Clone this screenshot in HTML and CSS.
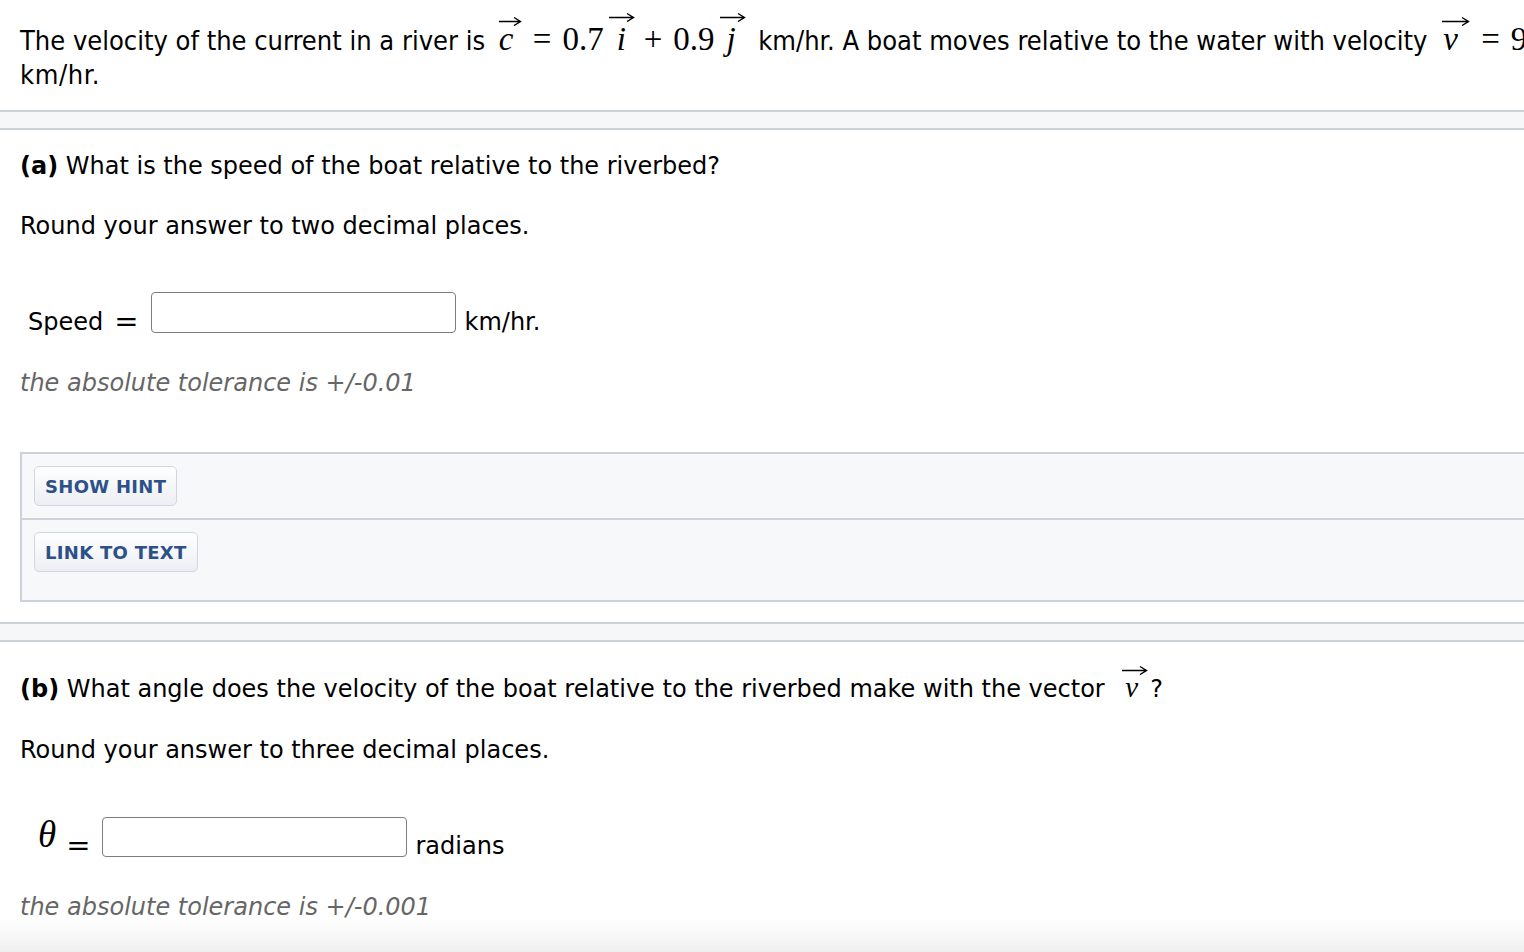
FILE: index.html
```html
<!DOCTYPE html>
<html lang="en">
<head>
<meta charset="utf-8">
<title>River velocity problem</title>
<link rel="stylesheet" href="styles.css">
</head>
<body>
<div class="page">
  <div class="intro">
    <div class="line1">The velocity of the current in a river is <span class="math"><span class="vec vc"><svg class="arrow" viewBox="0 0 24 10" width="24" height="10"><path d="M1 5.5H22M16 1.5L22.5 5.5L16 9.5" fill="none" stroke="#000" stroke-width="1.4"/></svg><i>c</i></span><span class="op">=</span><span class="num">0.7</span><span class="vec vi"><svg class="arrow" viewBox="0 0 27 10" width="27" height="10"><path d="M1 5.5H25M19 1.5L25.5 5.5L19 9.5" fill="none" stroke="#000" stroke-width="1.4"/></svg><i>i</i></span><span class="op plus">+</span><span class="num">0.9</span><span class="vec vj"><svg class="arrow" viewBox="0 0 27 10" width="27" height="10"><path d="M1 5.5H25M19 1.5L25.5 5.5L19 9.5" fill="none" stroke="#000" stroke-width="1.4"/></svg><i>j</i></span></span> km/hr. A boat moves relative to the water with velocity <span class="math"><span class="vec vv"><svg class="arrow" viewBox="0 0 29 10" width="29" height="10"><path d="M1 5.5H27M21 1.5L27.5 5.5L21 9.5" fill="none" stroke="#000" stroke-width="1.4"/></svg><i>v</i></span><span class="op">=</span><span class="num">9</span></span></div>
    <div class="line2">km/hr.</div>
  </div>

  <div class="sep"></div>

  <section class="part">
    <p class="question"><b>(a)</b> What is the speed of the boat relative to the riverbed?</p>
    <p class="round">Round your answer to two decimal places.</p>
    <div class="answer">
      <span class="label">Speed</span>
      <span class="equals">=</span>
      <input class="box" type="text" aria-label="Speed">
      <span class="unit">km/hr.</span>
    </div>
    <p class="tolerance">the absolute tolerance is +/-0.01</p>
    <div class="hintbox">
      <div class="hint-row"><button class="btn">Show Hint</button></div>
      <div class="hint-row hint-last"><button class="btn">Link to Text</button></div>
    </div>
  </section>

  <div class="sep sep-b"></div>

  <section class="part">
    <p class="question question-b"><b>(b)</b> What angle does the velocity of the boat relative to the riverbed make with the vector <span class="math mini"><span class="vec vq"><svg class="arrow" viewBox="0 0 27 10" width="27" height="10"><path d="M1 5.5H25M19 1.5L25.5 5.5L19 9.5" fill="none" stroke="#000" stroke-width="1.4"/></svg><i>v</i></span></span>?</p>
    <p class="round round-b">Round your answer to three decimal places.</p>
    <div class="answer answer-b">
      <span class="theta">θ</span>
      <span class="equals">=</span>
      <input class="box" type="text" aria-label="theta">
      <span class="unit">radians</span>
    </div>
    <p class="tolerance">the absolute tolerance is +/-0.001</p>
  </section>
</div>
<div class="fade"></div>
</body>
</html>
```

FILE: styles.css
```css
html, body {
  margin: 0;
  padding: 0;
  overflow: hidden;
  background: #fff;
}
body {
  font-family: "DejaVu Sans", Verdana, sans-serif;
  color: #000;
}
.page {
  width: 1700px;
}

/* intro paragraph */
.intro {
  padding: 24px 0 0 20px;
  font-family: "DejaVu Sans Condensed", "DejaVu Sans", sans-serif;
  font-size: 27px;
  line-height: 34px;
}
.line1 {
  white-space: nowrap;
  height: 34px;
}
.line2 {
  height: 34px;
  margin-bottom: 18px;
  letter-spacing: 0.6px;
}
.math {
  font-family: "Liberation Serif", "Times New Roman", serif;
  font-size: 33px;
  line-height: 20px;
  white-space: nowrap;
  margin-right: 5px;
}
.math .op {
  margin-left: 11px;
}
.math .plus {
  margin-left: 9px;
}
.math .num {
  margin-left: 11px;
}
.vec {
  position: relative;
  display: inline-block;
  box-sizing: border-box;
  line-height: 20px;
}
.vec i {
  font-style: italic;
}
.vec .arrow {
  position: absolute;
  left: 0;
  top: -17px;
}
.vc {
  width: 24px;
  padding-left: 1px;
  margin-left: 5px;
}
.vc .arrow,
.vv .arrow {
  top: -13px;
}
.vi, .vj {
  width: 27px;
  padding-left: 9px;
  margin-left: 4px;
}
.vj {
  padding-left: 8px;
  margin-left: 4px;
}
.vv {
  width: 29px;
  padding-left: 2px;
  margin-left: 6px;
}
.mini {
  font-size: 29px;
  margin-right: 2px;
}
.mini .vq .arrow {
  top: -12px;
}
.vq {
  width: 27px;
  padding-left: 4px;
  margin-left: 9px;
}

/* separators */
.sep {
  height: 16px;
  background: #f6f7f9;
  border-top: 2px solid #cbd2dc;
  border-bottom: 2px solid #cbd2dc;
}
.sep-b {
  margin-top: 20px;
}

/* parts */
.part {
  padding-left: 20px;
}
.question {
  margin: 21px 0 0;
  font-size: 24px;
  line-height: 30px;
  height: 30px;
  white-space: nowrap;
}
.question-b {
  margin-top: 32px;
}
.round {
  margin: 30px 0 0;
  font-size: 24px;
  line-height: 30px;
}
.round-b {
  margin-top: 31px;
}
.answer {
  display: flex;
  align-items: flex-end;
  margin-top: 51px;
  padding-left: 8px;
  font-size: 24px;
}
.answer-b {
  margin-top: 52px;
  padding-left: 18px;
}
.label, .unit {
  line-height: 22px;
}
.label {
  margin-right: 11px;
}
.equals {
  font-family: "DejaVu Sans", sans-serif;
  font-size: 29px;
  line-height: 24px;
  margin-right: 12px;
}
.theta {
  font-family: "Liberation Serif", serif;
  font-style: italic;
  font-size: 37px;
  line-height: 34px;
  margin-right: 10px;
  margin-bottom: 5px;
}
.answer-b .equals {
  margin-right: 11px;
}
.box {
  width: 305px;
  height: 41px;
  box-sizing: border-box;
  border: 1px solid #7d7d7d;
  border-radius: 4px;
  margin: 0 9px 0 0;
  padding: 0;
  background: #fff;
}
.answer-b .box {
  height: 40px;
}
.tolerance {
  margin: 35px 0 0;
  font-size: 24px;
  line-height: 30px;
  font-style: italic;
  color: #666;
}

/* hint box */
.hintbox {
  margin-top: 54px;
  background: #f7f8fa;
  border: 2px solid #cbd2dc;
  border-right: none;
}
.hint-row {
  padding: 12px 12px;
  height: 40px;
}
.hint-row + .hint-row {
  border-top: 2px solid #cbd2dc;
}
.hint-last {
  padding-bottom: 28px;
}
.btn {
  height: 40px;
  padding: 0 10px;
  font-family: "DejaVu Sans", Verdana, sans-serif;
  font-weight: bold;
  font-size: 18px;
  letter-spacing: 0.3px;
  text-transform: uppercase;
  color: #2d5089;
  background: linear-gradient(#ffffff, #eceef3);
  border: 1px solid #d2d7df;
  border-radius: 5px;
}

.fade {
  position: fixed;
  left: 0;
  right: 0;
  bottom: 0;
  height: 34px;
  background: linear-gradient(rgba(240,240,240,0), rgba(238,238,238,0.9));
  pointer-events: none;
}
```
